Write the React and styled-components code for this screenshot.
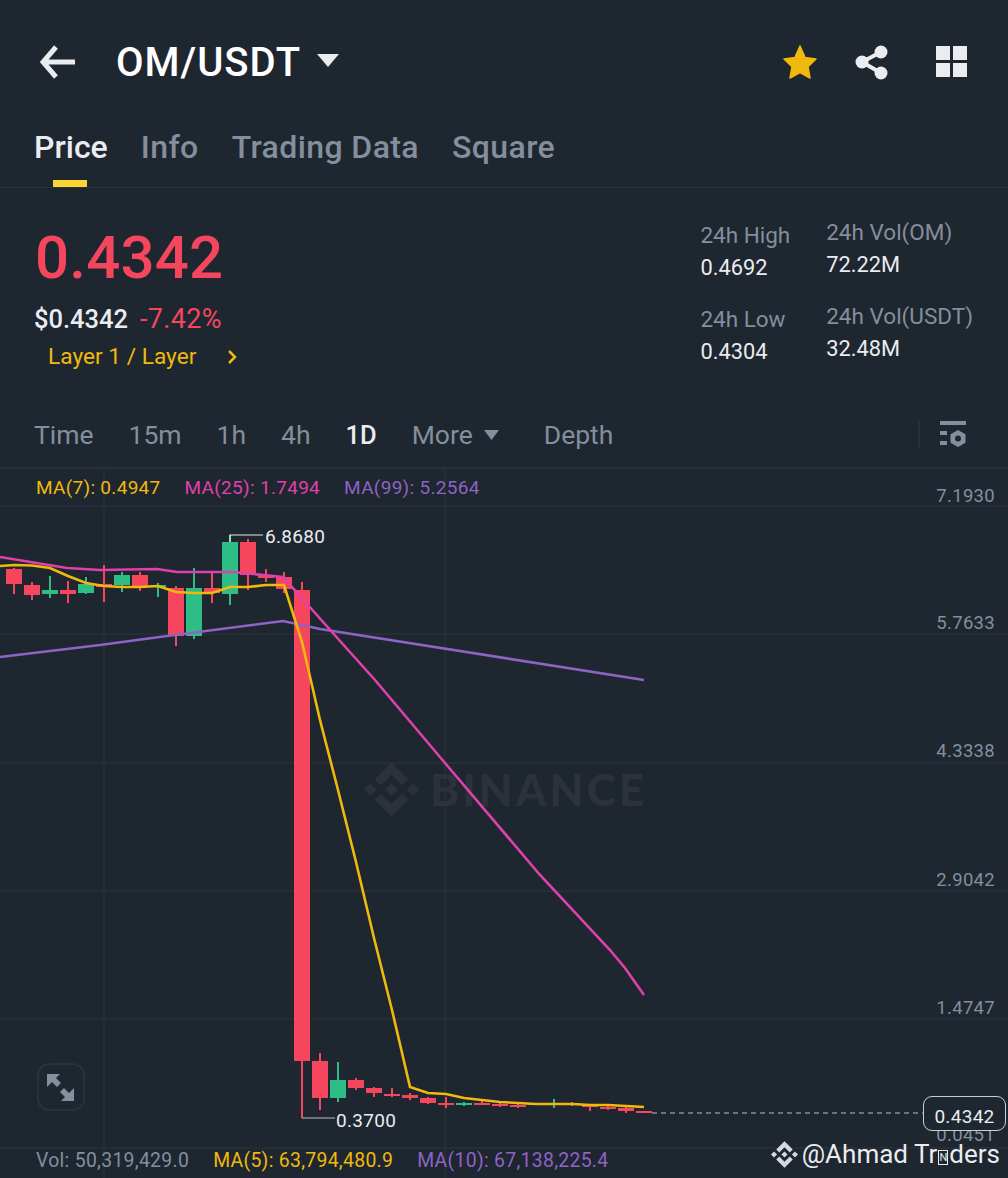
import styled, { createGlobalStyle } from 'styled-components';

const GlobalStyle = createGlobalStyle`
    html, body {
        margin: 0;
        padding: 0;
        background: #1e2630;
    }
    * {
        box-sizing: border-box;
    }
`;

const RED = '#f6465d';
const GREEN = '#2ebd85';
const YELLOW = '#f0b90b';
const PINK = '#e040ac';
const PURPLE = '#8e63c4';
const GREY = '#848e9c';
const LINE = '#2b3139';

const Page = styled.div`
    width: 1008px;
    height: 1178px;
    overflow: hidden;
    background: #1e2630;
    color: #eaecef;
    font-family: Roboto, "Noto Sans", sans-serif;
`;

const Header = styled.header`
    height: 124px;
    display: flex;
    align-items: center;
    padding: 0 40px;
`;

const Title = styled.h1`
    margin: 0 0 0 40px;
    font-size: 40px;
    font-weight: 500;
    color: #fff;
    letter-spacing: 1px;
`;

const HeaderIcons = styled.div`
    margin-left: auto;
    display: flex;
    align-items: center;
`;

const IconSlot = styled.span`
    display: flex;
    margin-left: ${(p) => p.$gap}px;
`;

const Tabs = styled.nav`
    height: 64px;
    display: flex;
    gap: 33px;
    padding: 3px 34px 0;
    border-bottom: 1px solid ${LINE};
`;

const Tab = styled.div`
    position: relative;
    height: 60px;
    line-height: 40px;
    font-size: 32px;
    font-weight: 500;
    letter-spacing: ${(p) => (p.$active ? 0 : 0.4)}px;
    color: ${(p) => (p.$active ? '#eaecef' : GREY)};

    &::after {
        content: '';
        display: ${(p) => (p.$active ? 'block' : 'none')};
        position: absolute;
        left: 19px;
        bottom: 0;
        width: 34px;
        height: 7px;
        background: #fcd535;
    }
`;

const Stats = styled.section`
    height: 217px;
    display: flex;
    justify-content: space-between;
    padding: 0 35px;
`;

const PriceBlock = styled.div`
    padding-top: 35px;
`;

const BigPrice = styled.div`
    font-size: 60px;
    line-height: 70px;
    font-weight: 500;
    color: ${RED};
    letter-spacing: 0.2px;
`;

const SubPrice = styled.div`
    display: flex;
    gap: 12px;
    margin-top: 11px;
    font-size: 25.5px;
    line-height: 30px;
    font-weight: 500;
    margin-left: -1px;
`;

const Change = styled.span`
    color: ${RED};
    font-weight: 400;
    font-size: 27px;
    letter-spacing: 0.3px;
`;

const Category = styled.div`
    display: flex;
    align-items: center;
    margin: 8px 0 0 13px;
    font-size: 22.7px;
    line-height: 30px;
    color: ${YELLOW};
`;

const StatGrid = styled.div`
    display: flex;
    gap: 36px;
`;

const StatCol = styled.div`
    display: flex;
    flex-direction: column;
    gap: 23px;
    padding-top: ${(p) => p.$top}px;
`;

const Stat = styled.div`
    display: flex;
    flex-direction: column;
    gap: 5px;
    line-height: 28px;
`;

const StatLabel = styled.span`
    font-size: 22.5px;
    color: ${GREY};
`;

const StatValue = styled.span`
    font-size: 21.8px;
    color: #eaecef;
`;

const Intervals = styled.div`
    height: 62px;
    display: flex;
    align-items: center;
    gap: 35px;
    padding: 0 34px 3px;
    font-size: 26.5px;
    color: ${GREY};
`;

const Interval = styled.span`
    display: flex;
    align-items: center;
    gap: 11px;
    color: ${(p) => (p.$active ? '#eaecef' : GREY)};
    font-weight: ${(p) => (p.$active ? 500 : 400)};
    font-size: ${(p) => (p.$active ? 25.5 : 26.5)}px;
    margin-left: ${(p) => p.$shift || 0}px;
`;

const IntervalTools = styled.div`
    margin-left: auto;
    display: flex;
    align-items: center;
    gap: 19px;
    margin-right: 7px;
`;

const Divider = styled.span`
    width: 2px;
    height: 27px;
    background: ${LINE};
`;

const Chart = styled.div`
    position: relative;
    height: 711px;
    border-top: 2px solid ${LINE};
`;

const ChartSvg = styled.svg`
    display: block;
    width: 1008px;
    height: 709px;
`;

const Legend = styled.div`
    position: absolute;
    left: 36px;
    top: ${(p) => p.$top}px;
    display: flex;
    gap: 24px;
    font-size: ${(p) => p.$size}px;
    line-height: 24px;
    letter-spacing: 0.3px;
    white-space: nowrap;
`;

const LegendItem = styled.span`
    color: ${(p) => p.$color};
`;

const ExpandButton = styled.div`
    position: absolute;
    left: 37px;
    top: 594px;
    width: 48px;
    height: 48px;
    border: 2px solid ${LINE};
    border-radius: 12px;
    display: flex;
    align-items: center;
    justify-content: center;
`;

const PriceTag = styled.div`
    position: absolute;
    left: 923px;
    top: 627px;
    width: 83px;
    height: 35px;
    border: 1px solid #c9ced6;
    border-radius: 9px;
    background: #1e2630;
    color: #eaecef;
    font-size: 19px;
    line-height: 40px;
    text-align: center;
    letter-spacing: 0.3px;
`;

const Credit = styled.div`
    position: absolute;
    right: 8px;
    top: 668px;
    display: flex;
    align-items: center;
    gap: 4px;
    font-size: 26px;
    line-height: 34px;
    color: #eaecef;
    white-space: nowrap;
`;

const Tofu = styled.span`
    display: inline-block;
    width: 10px;
    height: 15px;
    margin: 0 1px;
    border: 1px solid #eaecef;
    font-size: 11px;
    line-height: 13px;
    text-align: center;
    vertical-align: 2px;
`;

const AxisText = styled.text`
    font-size: 18.5px;
    fill: ${GREY};
    text-anchor: end;
    letter-spacing: 0.3px;
`;

const MarkText = styled.text`
    font-size: 19px;
    fill: #eaecef;
    letter-spacing: 0.3px;
`;

const Watermark = styled.text`
    font-family: Lato, "Liberation Sans", sans-serif;
    font-size: 44px;
    font-weight: 900;
    fill: #2c313c;
`;

const LOGO =
    'M9.8 13.6L16 7.4l6.2 6.2 3.6-3.6L16 .2 6.2 10zM0 16l3.6-3.6L7.2 16l-3.6 3.6zM9.8 18.4l6.2 6.2 6.2-6.2 3.6 3.6L16 31.8 6.2 22zM24.8 16l3.6-3.6L32 16l-3.6 3.6zM19.6 16L16 12.4 12.4 16 16 19.6z';

const GRID_Y = [506, 634, 763, 891, 1019, 1148];
const AXIS = [
    ['7.1930', 502],
    ['5.7633', 629],
    ['4.3338', 757],
    ['2.9042', 886],
    ['1.4747', 1014],
    ['0.0451', 1141],
];

// x, open(top), close(bottom), wick top, wick bottom, up?
const CANDLES = [
    [14, 569, 584, 568, 594, 0],
    [32, 585, 595, 582, 600, 0],
    [50, 590, 594, 576, 598, 1],
    [68, 590, 594, 581, 603, 0],
    [86, 584, 593, 577, 594, 1],
    [104, 584, 587, 565, 602, 0],
    [122, 575, 585, 572, 592, 1],
    [140, 575, 586, 572, 591, 0],
    [158, 585, 587, 583, 597, 1],
    [176, 588, 636, 586, 646, 0],
    [194, 588, 636, 568, 639, 1],
    [212, 588, 593, 572, 603, 0],
    [230, 542, 594, 535, 605, 1],
    [248, 542, 575, 539, 590, 0],
    [266, 575, 578, 569, 582, 0],
    [284, 577, 589, 572, 593, 0],
    [302, 590, 1061, 582, 1118, 0],
    [320, 1061, 1098, 1053, 1110, 0],
    [338, 1080, 1098, 1062, 1102, 1],
    [356, 1080, 1088, 1078, 1090, 0],
    [374, 1088, 1093, 1087, 1097, 0],
    [392, 1094, 1096, 1088, 1097, 0],
    [410, 1095, 1098, 1093, 1100, 0],
    [428, 1098, 1103, 1097, 1104, 0],
    [446, 1103, 1105, 1097, 1108, 0],
    [464, 1103, 1105, 1102, 1106, 1],
    [482, 1103, 1105, 1101, 1105, 0],
    [500, 1104, 1106, 1103, 1107, 0],
    [518, 1105, 1107, 1104, 1108, 0],
    [536, 1103, 1105, 1103, 1105, 1],
    [554, 1104, 1105, 1099, 1108, 1],
    [572, 1103, 1105, 1102, 1106, 0],
    [590, 1105, 1107, 1104, 1111, 0],
    [608, 1107, 1109, 1106, 1110, 0],
    [626, 1108, 1111, 1107, 1113, 0],
    [644, 1111, 1113, 1111, 1113, 0],
];

const MA7 =
    '0,566 14,565 32,565.5 50,568 68,576 86,583 104,586 122,587 140,587 158,586 176,592 194,593 212,593 230,587 248,587 266,585 284,585 302,642 320,720 338,790 356,862 374,938 392,1010 410,1087 428,1093 446,1094 464,1098 482,1100 500,1102 518,1103 536,1104 554,1104 572,1104 590,1105 608,1105 626,1106 644,1107';
const MA25 =
    '0,557 67,568 100,570 157,569 177,572 233,572 283,577 340,641 375,680 445,763 540,875 610,950 625,968 644,995';
const MA99 = '0,657 100,645 167,636 283,621 320,629 644,680';

const Star = () => (
    <svg width="36" height="36" viewBox="0 0 36 36">
        <path
            d="M18 2l5 11.4 11 1.5-8 7.9 2 11.2-10-5.4-10 5.4 2-11.2-8-7.9 11-1.5z"
            fill={YELLOW}
            stroke={YELLOW}
            strokeWidth="1.5"
            strokeLinejoin="round"
        />
    </svg>
);

const Share = () => (
    <svg width="34" height="36" viewBox="0 0 34 36" fill="#eaecef">
        <circle cx="26" cy="8" r="6.5" />
        <circle cx="7" cy="18" r="6.5" />
        <circle cx="26" cy="29" r="6.5" />
        <path d="M7 18L26 8M7 18l19 11" stroke="#eaecef" strokeWidth="4" />
    </svg>
);

const Apps = () => (
    <svg width="32" height="32" viewBox="0 0 32 32" fill="#eaecef">
        <rect x="0" y="0" width="14" height="14" />
        <rect x="17" y="0" width="14" height="14" />
        <rect x="0" y="17" width="14" height="14" />
        <rect x="17" y="17" width="14" height="14" />
    </svg>
);

const App = () => {
    return (
        <Page>
            <GlobalStyle />
            <Header>
                <svg width="36" height="34" viewBox="0 0 36 34" fill="none" stroke="#eaecef" strokeWidth="5">
                    <path d="M35 17H4M16 2L3 17l13 15" />
                </svg>
                <Title>OM/USDT</Title>
                <svg width="22" height="14" viewBox="0 0 22 14" style={{ marginLeft: 16, marginBottom: 4 }}>
                    <path d="M0 1h22L11 14z" fill="#eaecef" />
                </svg>
                <HeaderIcons>
                    <Star />
                    <IconSlot $gap={37}>
                        <Share />
                    </IconSlot>
                    <IconSlot $gap={47}>
                        <Apps />
                    </IconSlot>
                </HeaderIcons>
            </Header>
            <Tabs>
                <Tab $active>Price</Tab>
                <Tab>Info</Tab>
                <Tab>Trading Data</Tab>
                <Tab>Square</Tab>
            </Tabs>
            <Stats>
                <PriceBlock>
                    <BigPrice>0.4342</BigPrice>
                    <SubPrice>
                        <span>$0.4342</span>
                        <Change>-7.42%</Change>
                    </SubPrice>
                    <Category>
                        Layer 1 / Layer
                        <svg width="12" height="14" viewBox="0 0 12 14" style={{ marginLeft: 30 }} fill="none" stroke={YELLOW} strokeWidth="2.5">
                            <path d="M3 1l6 6-6 6" />
                        </svg>
                    </Category>
                </PriceBlock>
                <StatGrid>
                    <StatCol $top={33}>
                        <Stat>
                            <StatLabel>24h High</StatLabel>
                            <StatValue>0.4692</StatValue>
                        </Stat>
                        <Stat>
                            <StatLabel>24h Low</StatLabel>
                            <StatValue>0.4304</StatValue>
                        </Stat>
                    </StatCol>
                    <StatCol $top={30}>
                        <Stat>
                            <StatLabel>24h Vol(OM)</StatLabel>
                            <StatValue>72.22M</StatValue>
                        </Stat>
                        <Stat>
                            <StatLabel>24h Vol(USDT)</StatLabel>
                            <StatValue>32.48M</StatValue>
                        </Stat>
                    </StatCol>
                </StatGrid>
            </Stats>
            <Intervals>
                <Interval>Time</Interval>
                <Interval>15m</Interval>
                <Interval>1h</Interval>
                <Interval>4h</Interval>
                <Interval $active>1D</Interval>
                <Interval>
                    More
                    <svg width="15" height="10" viewBox="0 0 15 10">
                        <path d="M0 0h15L7.5 10z" fill={GREY} />
                    </svg>
                </Interval>
                <Interval $shift={10}>Depth</Interval>
                <IntervalTools>
                    <Divider />
                    <svg width="28" height="28" viewBox="0 0 28 28" fill={GREY}>
                        <rect x="1" y="0" width="26" height="4" />
                        <rect x="1" y="10" width="7" height="4" />
                        <rect x="1" y="20" width="7" height="4" />
                        <path
                            fillRule="evenodd"
                            d="M19 9l7.5 4.3v8.4L19 26l-7.5-4.3v-8.4zM19 14.5a3 3 0 100 6 3 3 0 000-6z"
                        />
                    </svg>
                </IntervalTools>
            </Intervals>
            <Chart>
                <ChartSvg viewBox="0 469 1008 709">
                    {GRID_Y.map((y) => (
                        <line key={y} x1="0" x2="1008" y1={y} y2={y} stroke={LINE} strokeWidth="1.5" />
                    ))}
                    <line x1="104" x2="104" y1="469" y2="1178" stroke={LINE} strokeWidth="1.5" />
                    <line x1="445" x2="445" y1="469" y2="1178" stroke={LINE} strokeWidth="1.5" />

                    <path d={LOGO} fill="#2c313c" transform="translate(364 762) scale(1.72)" />
                    <Watermark x="430" y="806" textLength="214">BINANCE</Watermark>

                    {AXIS.map(([label, y]) => (
                        <AxisText key={label} x="995" y={y}>
                            {label}
                        </AxisText>
                    ))}

                    {CANDLES.map(([x, top, bottom, wickTop, wickBottom, up]) => (
                        <g key={x} fill={up ? GREEN : RED}>
                            <rect x={x - 1} y={wickTop} width="2" height={wickBottom - wickTop} />
                            <rect x={x - 8} y={top} width="16" height={bottom - top} />
                        </g>
                    ))}

                    <polyline points={MA99} fill="none" stroke={PURPLE} strokeWidth="2.6" />
                    <polyline points={MA25} fill="none" stroke={PINK} strokeWidth="2.6" />
                    <polyline points={MA7} fill="none" stroke={YELLOW} strokeWidth="2.6" />

                    <path d="M230 542v-7h33" fill="none" stroke="#eaecef" strokeWidth="1.2" />
                    <MarkText x="265" y="543">6.8680</MarkText>
                    <path d="M302 1118h33" fill="none" stroke="#b7bdc6" strokeWidth="1.2" />
                    <MarkText x="336" y="1127">0.3700</MarkText>

                    <line x1="652" x2="923" y1="1113" y2="1113" stroke="#b7bdc6" strokeWidth="1.2" strokeDasharray="5 4" />
                </ChartSvg>

                <Legend $top={7} $size={19}>
                    <LegendItem $color={YELLOW}>MA(7): 0.4947</LegendItem>
                    <LegendItem $color={PINK}>MA(25): 1.7494</LegendItem>
                    <LegendItem $color={PURPLE}>MA(99): 5.2564</LegendItem>
                </Legend>

                <ExpandButton>
                    <svg width="32" height="32" viewBox="0 0 32 32" fill={GREY}>
                        <path d="M2 3h13l-4 4 5 5-4 4-5-5-5 5z" />
                        <path d="M29 30H16l4-4-5-5 4-4 5 5 5-5z" />
                    </svg>
                </ExpandButton>

                <PriceTag>0.4342</PriceTag>

                <Legend $top={680} $size={19.4}>
                    <LegendItem $color={GREY}>Vol: 50,319,429.0</LegendItem>
                    <LegendItem $color={YELLOW}>MA(5): 63,794,480.9</LegendItem>
                    <LegendItem $color={PURPLE}>MA(10): 67,138,225.4</LegendItem>
                </Legend>

                <Credit>
                    <svg width="27" height="27" viewBox="0 0 32 32">
                        <path d={LOGO} fill="#d5d8dc" />
                    </svg>
                    <span>
                        @Ahmad Tr<Tofu>N</Tofu>ders
                    </span>
                </Credit>
            </Chart>
        </Page>
    );
};

export default App;
